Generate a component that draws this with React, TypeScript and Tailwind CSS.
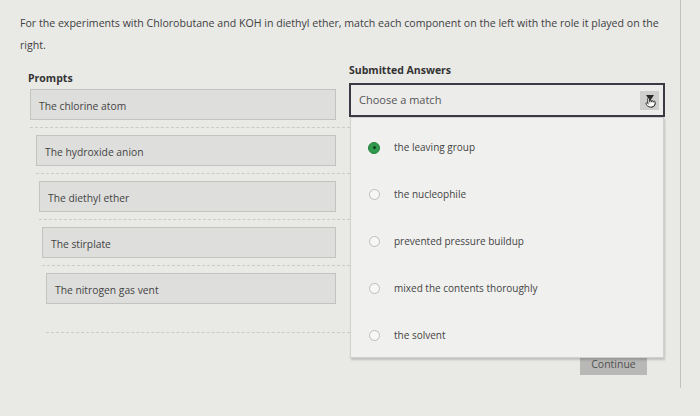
import { Pointer } from 'lucide-react';

const prompts = [
  { label: 'The chlorine atom', indent: 'ml-[10px]' },
  { label: 'The hydroxide anion', indent: 'ml-[16px]' },
  { label: 'The diethyl ether', indent: 'ml-[19px]' },
  { label: 'The stirplate', indent: 'ml-[22px]' },
  { label: 'The nitrogen gas vent', indent: 'ml-[26px]' },
];

const options = [
  { label: 'the leaving group', selected: true },
  { label: 'the nucleophile', selected: false },
  { label: 'prevented pressure buildup', selected: false },
  { label: 'mixed the contents thoroughly', selected: false },
  { label: 'the solvent', selected: false },
];

function Radio({ selected }: { selected: boolean }) {
  if (selected) {
    return (
      <span className="w-[12px] h-[12px] rounded-full bg-[#2f9a4c] border border-[#23803d] flex items-center justify-center shrink-0">
        <span className="w-[3px] h-[3px] rounded-full bg-[#123a1c]" />
      </span>
    );
  }
  return <span className="w-[11px] h-[11px] rounded-full bg-[#f7f7f5] border border-[#bdbdbb] shrink-0" />;
}

export default function App() {
  return (
    <div
      className="w-[700px] h-[416px] bg-[#e9e9e6] overflow-hidden text-[#3f3f3f]"
      style={{ fontFamily: '"Open Sans", "Noto Sans", sans-serif' }}
    >
      <div className="w-[681px] h-[388px] border-r border-[#c2c2c0] pl-[20px] pt-[12px]">
        <p className="w-[645px] text-[10.6px] leading-[22px]">
          For the experiments with Chlorobutane and KOH in diethyl ether, match each component on the left with the role it played on the right.
        </p>

        <div className="flex">
          {/* prompts column */}
          <div className="w-[330px] shrink-0">
            <div className="mt-[15px] pl-[8px] text-[10.5px] font-bold text-[#333] leading-[14px]">Prompts</div>
            <div className="mt-[4px]">
              {prompts.map((p, i) => (
                <div key={p.label}>
                  <div
                    className={`${p.indent} mr-[14px] h-[31px] bg-[#dededc] border border-[#c3c3c1] flex items-center pl-[8px] pt-[4px] text-[10.3px] text-[#444] ${
                      i > 0 ? 'mt-[7px]' : ''
                    }`}
                  >
                    {p.label}
                  </div>
                  <div
                    className={`${p.indent} border-t border-dashed border-[#cacac8] ${
                      i === prompts.length - 1 ? 'mt-[28px]' : 'mt-[7px]'
                    }`}
                  />
                </div>
              ))}
            </div>
          </div>

          {/* answers column */}
          <div className="w-[316px] shrink-0 -ml-[1px]">
            <div className="mt-[7px] text-[10.5px] font-bold text-[#333] leading-[14px]">Submitted Answers</div>
            <div className="relative mt-[6px]">
              <div className="h-[34px] border-2 border-[#3b3a44] bg-[#ececea] flex items-center pl-[8px] pr-[4px]">
                <span className="text-[11px] text-[#555]">Choose a match</span>
                <span className="ml-auto w-[19px] h-[19px] bg-[#cfcfcd] relative flex justify-center">
                  <svg width="8" height="6" viewBox="0 0 8 6" className="mt-[4px]">
                    <path d="M0 0h8L4 6z" fill="#2a2a2a" />
                  </svg>
                  <Pointer
                    size={11}
                    strokeWidth={2}
                    className="absolute left-[5px] top-[6px] fill-white text-[#222]"
                  />
                </span>
              </div>

              {/* open dropdown list */}
              <div className="absolute left-[1px] top-full w-[314px] h-[241px] bg-[#f0f0ee] border border-[#d0d0ce] shadow-[1px_2px_2px_rgba(0,0,0,0.18)] z-10 pt-[6px]">
                {options.map((o) => (
                  <div key={o.label} className="h-[47px] flex items-center pl-[17px]">
                    <span className="w-[12px] flex justify-center">
                      <Radio selected={o.selected} />
                    </span>
                    <span className="ml-[14px] text-[10px] text-[#444]">{o.label}</span>
                  </div>
                ))}
              </div>
            </div>

            <div className="flex justify-end mt-[238px] mr-[18px]">
              <button className="w-[67px] h-[20px] bg-[#b8b8b6] text-[10.5px] text-[#505050] flex items-start justify-center pt-[3px] leading-[12px]">
                Continue
              </button>
            </div>
          </div>
        </div>
      </div>
    </div>
  );
}
